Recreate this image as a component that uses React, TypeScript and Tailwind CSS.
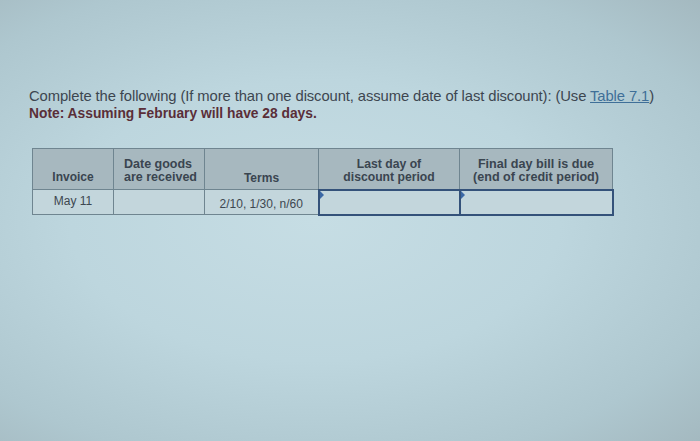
import React from "react";

export default function App() {
  const font = { fontFamily: '"Liberation Sans", Arial, sans-serif' };
  return (
    <div
      className="relative h-[441px] w-[700px] overflow-hidden bg-[radial-gradient(ellipse_at_45%_50%,#c6dde4_0%,#bdd6de_45%,#aec7cf_80%,#a4b9c0_100%)] text-[#3b4650]"
      style={font}
    >
      <div className="pl-[29px] pt-[88px]">
        <p className="whitespace-nowrap text-[14.8px] leading-[17px] tracking-[-0.1px] text-[#3d4650]">
          Complete the following (If more than one discount, assume date of last discount): (Use{" "}
          <span className="text-[#3f6f98] underline">Table 7.1</span>)
        </p>
        <p className="whitespace-nowrap text-[13.8px] font-bold leading-[17px] text-[#5a2e38]">
          Note: Assuming February will have 28 days.
        </p>
      </div>

      <div className="pl-[32px] pt-[26px]">
        <table className="border-collapse text-[12px]">
          <thead>
            <tr className="bg-[#a7b8bf] font-bold text-[#3a4550]">
              <th className="h-[41px] w-[81px] border border-[#6f8590] px-1 pb-[5px] align-bottom font-bold leading-[13px]">
                Invoice
              </th>
              <th className="w-[91px] border border-[#6f8590] px-1 pb-[5px] pl-[10px] text-left align-bottom text-[12.5px] font-bold leading-[13px]">
                Date goods
                <br />
                are received
              </th>
              <th className="w-[114px] border border-[#6f8590] px-1 pb-[4px] align-bottom font-bold leading-[13px]">
                Terms
              </th>
              <th className="w-[141px] border border-[#6f8590] px-1 pb-[5px] align-bottom text-[12.2px] font-bold leading-[13px]">
                Last day of
                <br />
                discount period
              </th>
              <th className="w-[153px] border border-[#6f8590] px-1 pb-[5px] align-bottom text-[12.6px] font-bold leading-[13px]">
                Final day bill is due
                <br />
                (end of credit period)
              </th>
            </tr>
          </thead>
          <tbody>
            <tr className="bg-[#c3d6dc] text-[#3d4750]">
              <td className="h-[25px] border border-[#6f8590] pb-[2px] text-center">May 11</td>
              <td className="border border-[#6f8590]"></td>
              <td className="border border-[#6f8590] pt-[3px] text-center">2/10, 1/30, n/60</td>
              <td className="relative border-2 border-[#34527a]">
                <span className="absolute left-0 top-0 h-0 w-0 border-l-[4px] border-t-[4px] border-b-[4px] border-l-[#3b68a5] border-t-transparent border-b-transparent" />
              </td>
              <td className="relative border-2 border-[#34527a]">
                <span className="absolute left-0 top-0 h-0 w-0 border-l-[4px] border-t-[4px] border-b-[4px] border-l-[#3b68a5] border-t-transparent border-b-transparent" />
              </td>
            </tr>
          </tbody>
        </table>
      </div>
    </div>
  );
}
